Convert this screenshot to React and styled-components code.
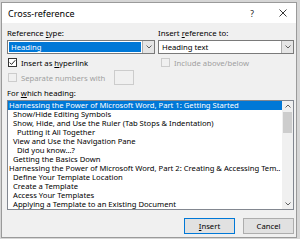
import React from "react";
import styled, { createGlobalStyle } from "styled-components";

const GlobalStyle = createGlobalStyle`
  html, body { margin: 0; padding: 0; }
  body {
    background: #d6d6d6;
    font-family: "Noto Sans", "Open Sans", sans-serif;
    color: #000;
  }
`;

const headings = [
  { text: "Harnessing the Power of Microsoft Word, Part 1: Getting Started", level: 0 },
  { text: "Show/Hide Editing Symbols", level: 1 },
  { text: "Show, Hide, and Use the Ruler (Tab Stops & Indentation)", level: 1 },
  { text: "Putting it All Together", level: 2 },
  { text: "View and Use the Navigation Pane", level: 1 },
  { text: "Did you know...?", level: 2 },
  { text: "Getting the Basics Down", level: 1 },
  { text: "Harnessing the Power of Microsoft Word, Part 2: Creating & Accessing Tem..", level: 0 },
  { text: "Define Your Template Location", level: 1 },
  { text: "Create a Template", level: 1 },
  { text: "Access Your Templates", level: 1 },
  { text: "Applying a Template to an Existing Document", level: 1 },
];

const Chevron = ({ up }) => (
  <svg width="6" height="4" viewBox="0 0 6 4">
    <path
      d={up ? "M0.5 3.5 L3 1 L5.5 3.5" : "M0.5 0.5 L3 3 L5.5 0.5"}
      fill="none"
      stroke="#606060"
      strokeWidth="1"
    />
  </svg>
);

export default function App() {
  return (
    <Screen>
      <GlobalStyle />
      <Window>
        <TitleBar>
          <Title>Cross-reference</Title>
          <TitleButtons>
            <HelpGlyph>?</HelpGlyph>
            <svg width="8" height="8" viewBox="0 0 8 8">
              <path d="M0.5 0.5 L7.5 7.5 M7.5 0.5 L0.5 7.5" stroke="#222" strokeWidth="0.9" />
            </svg>
          </TitleButtons>
        </TitleBar>

        <Body>
          <TopGrid>
            <Column>
              <FieldLabel>
                Reference <Key>t</Key>ype:
              </FieldLabel>
              <Combo>
                <ComboValue selected>Heading</ComboValue>
                <DropButton>
                  <Chevron />
                </DropButton>
              </Combo>
              <CheckRow>
                <CheckBox>
                  <svg width="8" height="7" viewBox="0 0 8 7">
                    <path d="M0.8 3.6 L2.9 5.7 L7.2 0.9" fill="none" stroke="#1a1a1a" strokeWidth="1.1" />
                  </svg>
                </CheckBox>
                <CheckLabel>
                  Insert as <Key>h</Key>yperlink
                </CheckLabel>
              </CheckRow>
              <SeparateRow>
                <CheckBox disabled />
                <CheckLabel disabled>Separate numbers with</CheckLabel>
                <SmallInput />
              </SeparateRow>
            </Column>

            <Column>
              <FieldLabel>
                Insert <Key>r</Key>eference to:
              </FieldLabel>
              <Combo>
                <ComboValue>Heading text</ComboValue>
                <DropButton>
                  <Chevron />
                </DropButton>
              </Combo>
              <CheckRow indent>
                <CheckBox disabled />
                <CheckLabel disabled>Include above/below</CheckLabel>
              </CheckRow>
            </Column>
          </TopGrid>

          <ListLabel>
            For <Key>w</Key>hich heading:
          </ListLabel>
          <ListBox>
            <Items>
              {headings.map((h, i) => (
                <Item key={i} level={h.level} selected={i === 0}>
                  {h.text}
                </Item>
              ))}
            </Items>
            <ScrollBar>
              <ScrollArrow>
                <Chevron up />
              </ScrollArrow>
              <Track>
                <Thumb />
              </Track>
              <ScrollArrow>
                <Chevron />
              </ScrollArrow>
            </ScrollBar>
          </ListBox>

          <ButtonRow>
            <DialogButton primary>
              <Key>I</Key>nsert
            </DialogButton>
            <DialogButton>Cancel</DialogButton>
          </ButtonRow>
        </Body>
      </Window>
    </Screen>
  );
}

const Screen = styled.div`
  width: 300px;
  height: 239px;
  box-sizing: border-box;
  padding: 2px 3px 1px 1px;
  overflow: hidden;
`;

const Window = styled.div`
  width: 296px;
  height: 236px;
  box-sizing: border-box;
  border: 1px solid #9a9a9a;
  background: #f0f0f0;
  display: flex;
  flex-direction: column;
`;

const TitleBar = styled.div`
  height: 20px;
  background: #fff;
  display: flex;
  align-items: center;
  justify-content: space-between;
  padding: 0 9px 0 6px;
`;

const Title = styled.div`
  font-size: 9px;
  color: #000;
`;

const TitleButtons = styled.div`
  display: flex;
  align-items: center;
  gap: 25px;
`;

const HelpGlyph = styled.span`
  font-size: 8.5px;
  color: #222;
`;

const Body = styled.div`
  flex: 1;
  padding: 5px 1px 0 5px;
  display: flex;
  flex-direction: column;
`;

const TopGrid = styled.div`
  display: grid;
  grid-template-columns: 148px 136px;
  column-gap: 3px;
`;

const Column = styled.div`
  display: flex;
  flex-direction: column;
`;

const Key = styled.span`
  text-decoration: underline;
`;

const FieldLabel = styled.div`
  font-size: 7.8px;
  line-height: 11px;
  height: 11px;
  margin-bottom: 1px;
`;

const Combo = styled.div`
  height: 14px;
  box-sizing: border-box;
  border: 1px solid #7a7a7a;
  background: #fff;
  display: flex;
`;

const ComboValue = styled.div`
  flex: 1;
  margin: 1px;
  padding-left: 2px;
  font-size: 7.7px;
  line-height: 10px;
  background: ${(p) => (p.selected ? "#0078d7" : "transparent")};
  color: ${(p) => (p.selected ? "#fff" : "#000")};
`;

const DropButton = styled.div`
  width: 11px;
  border-left: 1px solid #adadad;
  background: #e5e5e5;
  display: flex;
  align-items: center;
  justify-content: center;
`;

const CheckRow = styled.div`
  display: flex;
  align-items: center;
  gap: 4px;
  height: 11px;
  margin-top: 3px;
  padding-left: ${(p) => (p.indent ? 3 : 1)}px;
`;

const SeparateRow = styled(CheckRow)`
  height: 15px;
  margin-top: 2px;
`;

const CheckBox = styled.div`
  width: 9px;
  height: 9px;
  box-sizing: border-box;
  border: 1px solid ${(p) => (p.disabled ? "#cccccc" : "#333")};
  background: ${(p) => (p.disabled ? "#f0f0f0" : "#fff")};
  display: flex;
  align-items: center;
  justify-content: center;
`;

const CheckLabel = styled.span`
  font-size: 7.7px;
  color: ${(p) => (p.disabled ? "#a0a0a0" : "#000")};
`;

const SmallInput = styled.div`
  width: 20px;
  height: 15px;
  box-sizing: border-box;
  border: 1px solid #cccccc;
  background: #f0f0f0;
  margin-left: 5px;
`;

const ListLabel = styled.div`
  font-size: 7.7px;
  line-height: 10px;
  margin-top: 3px;
  margin-bottom: 2px;
`;

const ListBox = styled.div`
  width: 287px;
  height: 110px;
  box-sizing: border-box;
  border: 1px solid #828790;
  background: #fff;
  display: flex;
`;

const Items = styled.div`
  flex: 1;
  overflow: hidden;
  display: flex;
  flex-direction: column;
`;

const Item = styled.div`
  height: 9px;
  line-height: 9px;
  font-size: 7.65px;
  white-space: nowrap;
  padding-left: ${(p) => 1 + p.level * 4}px;
  background: ${(p) => (p.selected ? "#0078d7" : "transparent")};
  color: ${(p) => (p.selected ? "#fff" : "#000")};
`;

const ScrollBar = styled.div`
  width: 11px;
  background: #f0f0f0;
  display: flex;
  flex-direction: column;
`;

const ScrollArrow = styled.div`
  height: 10px;
  display: flex;
  align-items: center;
  justify-content: center;
`;

const Track = styled.div`
  flex: 1;
  padding: 1px 1px 0 1px;
`;

const Thumb = styled.div`
  height: 21px;
  background: #cdcdcd;
`;

const ButtonRow = styled.div`
  display: flex;
  justify-content: flex-end;
  gap: 8px;
  margin-top: 8px;
  padding-right: 1px;
`;

const DialogButton = styled.div`
  width: 51px;
  height: 16px;
  box-sizing: border-box;
  border: 1px solid ${(p) => (p.primary ? "#0078d7" : "#adadad")};
  background: #e1e1e1;
  font-size: 7.7px;
  display: flex;
  align-items: center;
  justify-content: center;
`;
